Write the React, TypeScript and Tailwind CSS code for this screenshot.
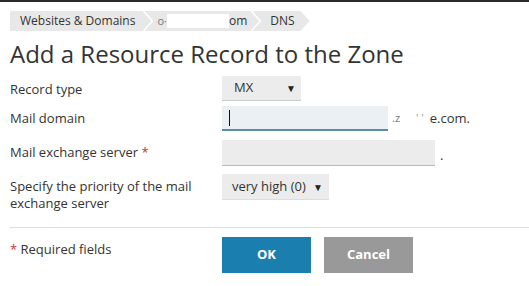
import React from "react";

const seg = "[clip-path:polygon(0_0,calc(100%-9px)_0,100%_50%,calc(100%-9px)_100%,0_100%,9px_50%)]";
const segFirst = "[clip-path:polygon(0_0,calc(100%-9px)_0,100%_50%,calc(100%-9px)_100%,0_100%)]";

function Caret() {
  return <span className="text-[10px] leading-none text-[#222]">▼</span>;
}

export default function App() {
  return (
    <div className="w-[529px] h-[286px] bg-white overflow-hidden font-['Open_Sans',sans-serif] text-[#333]">
      <div className="h-[2px] bg-[#2a2a2a]" />
      <div className="pl-[10px] pt-[9px]">
        <div className="flex h-[20px] text-[12px] leading-[20px]">
          <div className={`bg-[#e8e8e8] pl-[10px] pr-[16px] ${segFirst}`}>Websites &amp; Domains</div>
          <div className={`bg-[#e8e8e8] -ml-[7px] pl-[13px] pr-[12px] flex items-center ${seg}`}>
            <span className="text-[#777] text-[11px]">o·</span>
            <span className="inline-block w-[62px] h-[14px] bg-white" />
            <span>om</span>
          </div>
          <div className={`bg-[#e8e8e8] -ml-[7px] pl-[18px] pr-[15px] ${seg}`}>DNS</div>
        </div>
        <h1 className="text-[24px] leading-[32px] mt-[7px] text-[#333]">Add a Resource Record to the Zone</h1>
      </div>
      <div className="pl-[10px] mt-[6px] text-[13px]">
        <div className="grid grid-cols-[212px_1fr] items-center gap-y-[5px]">
          <div className="leading-[18px]">Record type</div>
          <div className="flex">
            <div className="w-[79px] h-[25px] bg-[#ececec] border-b border-[#c8c8c8] flex items-center justify-between pl-[12px] pr-[5px]">
              <span>MX</span>
              <Caret />
            </div>
          </div>
          <div>Mail domain</div>
          <div className="flex items-center">
            <div className="w-[166px] h-[25px] bg-[#eaf0f3] border-b-2 border-[#5b8ba5] flex items-center pl-[7px]">
              <span className="w-px h-[16px] bg-[#111]" />
            </div>
            <span className="ml-[4px] text-[#777] text-[11px]">.z</span>
            <span className="ml-[16px] text-[#999] text-[11px]">' '</span>
            <span className="ml-[6px]">e.com.</span>
          </div>
          <div className="pt-[4px]">Mail exchange server <span className="text-[#c0392b]">*</span></div>
          <div className="flex items-end pt-[4px]">
            <div className="w-[213px] h-[26px] bg-[#ececec] border-b border-[#bbb]" />
            <span className="ml-[5px] mb-[1px]">.</span>
          </div>
          <div className="leading-[17px] pt-[3px] self-start mt-[4px]">Specify the priority of the mail<br />exchange server</div>
          <div className="flex self-start pt-[3px]">
            <div className="w-[107px] h-[26px] bg-[#ececec] border-b border-[#ddd] flex items-center justify-between pl-[10px] pr-[6px]">
              <span>very high (0)</span>
              <Caret />
            </div>
          </div>
        </div>
        <div className="h-px bg-[#dedede] mt-[15px]" />
        <div className="grid grid-cols-[212px_1fr] mt-[9px]">
          <div className="mt-[3px]"><span className="text-[#c0392b]">*</span> Required fields</div>
          <div className="flex gap-[13px]">
            <button className="w-[89px] h-[36px] bg-[#1a7fae] text-white font-bold text-[13px]">OK</button>
            <button className="w-[89px] h-[36px] bg-[#999999] text-white font-bold text-[13px]">Cancel</button>
          </div>
        </div>
      </div>
    </div>
  );
}
